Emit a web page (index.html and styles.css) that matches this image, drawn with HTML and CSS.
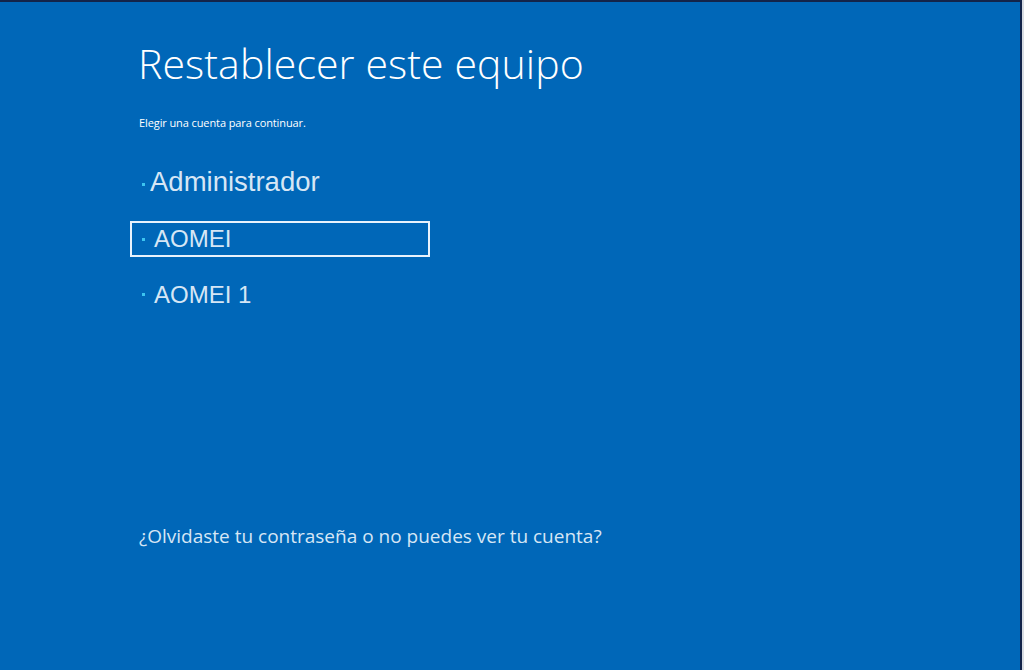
FILE: index.html
```html
<!DOCTYPE html>
<html lang="es">
<head>
	<meta charset="UTF-8">
	<title>Restablecer este equipo</title>
	<link rel="stylesheet" href="styles.css">
</head>
<body>
	<div id="screen">
		<div id="content">
			<h1 id="title">Restablecer este equipo</h1>
			<p id="hint">Elegir una cuenta para continuar.</p>
			<ul id="accounts">
				<li class="account first"><span class="dot"></span>Administrador</li>
				<li class="account selected"><span class="dot"></span>AOMEI</li>
				<li class="account"><span class="dot"></span>AOMEI 1</li>
			</ul>
			<p id="forgot">¿Olvidaste tu contraseña o no puedes ver tu cuenta?</p>
		</div>
	</div>
</body>
</html>
```

FILE: styles.css
```css
* {
	margin: 0;
	padding: 0;
}
html, body {
	width: 1024px;
	height: 670px;
	overflow: hidden;
	background: #d9dde3;
}
#screen {
	width: 1020px;
	height: 668px;
	border-top: 2px solid #13244a;
	border-right: 2px solid #13244a;
	background-color: #0067b8;
}
#content {
	padding: 0 0 0 130px;
	color: #fff;
}
#title {
	padding: 29px 0 0 8px;
	height: 64px;
	font: 300 41px/64px "Open Sans", sans-serif;
	letter-spacing: 0.1px;
}
#hint {
	padding: 21px 0 0 9px;
	font: 11px/14px "Open Sans", sans-serif;
	letter-spacing: -0.1px;
}
#accounts {
	list-style: none;
	margin-top: 34px;
	width: 300px;
}
.account {
	position: relative;
	height: 36px;
	line-height: 36px;
	margin-top: 20px;
	padding-left: 24px;
	color: #d6e6f5;
	font: 24px/36px "Liberation Sans", Arial, sans-serif;
}
.account.first {
	margin-top: 0;
	padding-left: 20px;
	font-size: 27.5px;
}
.selected {
	box-sizing: border-box;
	margin-top: 21px;
	border: 2px solid #e8f2fc;
	padding-left: 22px;
	line-height: 32px;
}
.dot {
	position: absolute;
	left: 12px;
	top: 16px;
	width: 3px;
	height: 3px;
	background: #3cc4f0;
}
.first .dot {
	top: 19px;
}
.selected .dot {
	left: 10px;
	top: 15px;
}
#forgot {
	margin-top: 211px;
	padding-left: 9px;
	color: #d6e6f5;
	font: 19px/24px "Open Sans", sans-serif;
}
```
